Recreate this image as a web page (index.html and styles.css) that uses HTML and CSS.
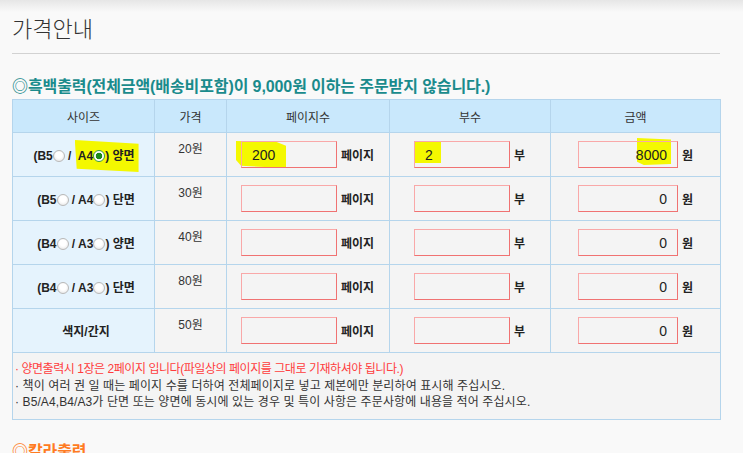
FILE: index.html
```html
<!DOCTYPE html>
<html lang="ko">
<head>
<meta charset="utf-8">
<link rel="stylesheet" href="styles.css">
</head>
<body>
<div class="page">
  <h1 class="title">가격안내</h1>
  <hr class="rule">
  <h2 class="sec bw">◎흑백출력(전체금액(배송비포함)이 9,000원 이하는 주문받지 않습니다.)</h2>
  <table class="price">
    <colgroup>
      <col class="c1"><col class="c2"><col class="c3"><col class="c4"><col class="c5">
    </colgroup>
    <thead>
      <tr><th>사이즈</th><th>가격</th><th>페이지수</th><th>부수</th><th>금액</th></tr>
    </thead>
    <tbody>
      <tr>
        <td class="size"><b>(B5<span class="radio"></span> / <span class="hl hl-size">A4<span class="radio on"></span>) 양면</span></b></td>
        <td class="cost">20원</td>
        <td class="qty"><span class="field"><span class="hl hl-page"></span><input class="box" value="200"></span><span class="unit">페이지</span></td>
        <td class="copies"><span class="field"><span class="hl hl-copy"></span><input class="box" value="2"></span><span class="unit">부</span></td>
        <td class="amt"><span class="field"><span class="hl hl-amt"></span><input class="box wide right" value="8000"></span><span class="unit">원</span></td>
      </tr>
      <tr>
        <td class="size"><b>(B5<span class="radio"></span> / A4<span class="radio"></span>) 단면</b></td>
        <td class="cost">30원</td>
        <td class="qty"><span class="field"><input class="box" value=""></span><span class="unit">페이지</span></td>
        <td class="copies"><span class="field"><input class="box" value=""></span><span class="unit">부</span></td>
        <td class="amt"><span class="field"><input class="box wide right" value="0"></span><span class="unit">원</span></td>
      </tr>
      <tr>
        <td class="size"><b>(B4<span class="radio"></span> / A3<span class="radio"></span>) 양면</b></td>
        <td class="cost">40원</td>
        <td class="qty"><span class="field"><input class="box" value=""></span><span class="unit">페이지</span></td>
        <td class="copies"><span class="field"><input class="box" value=""></span><span class="unit">부</span></td>
        <td class="amt"><span class="field"><input class="box wide right" value="0"></span><span class="unit">원</span></td>
      </tr>
      <tr>
        <td class="size"><b>(B4<span class="radio"></span> / A3<span class="radio"></span>) 단면</b></td>
        <td class="cost">80원</td>
        <td class="qty"><span class="field"><input class="box" value=""></span><span class="unit">페이지</span></td>
        <td class="copies"><span class="field"><input class="box" value=""></span><span class="unit">부</span></td>
        <td class="amt"><span class="field"><input class="box wide right" value="0"></span><span class="unit">원</span></td>
      </tr>
      <tr>
        <td class="size"><b>색지/간지</b></td>
        <td class="cost">50원</td>
        <td class="qty"><span class="field"><input class="box" value=""></span><span class="unit">페이지</span></td>
        <td class="copies"><span class="field"><input class="box" value=""></span><span class="unit">부</span></td>
        <td class="amt"><span class="field"><input class="box wide right" value="0"></span><span class="unit">원</span></td>
      </tr>
      <tr>
        <td class="notes" colspan="5">
          <p class="note red">· 양면출력시 1장은 2페이지 입니다(파일상의 페이지를 그대로 기재하셔야 됩니다.)</p>
          <p class="note">· 책이 여러 권 일 때는 페이지 수를 더하여 전체페이지로 넣고 제본에만 분리하여 표시해 주십시오.</p>
          <p class="note">· B5/A4,B4/A3가 단면 또는 양면에 동시에 있는 경우 및 특이 사항은 주문사항에 내용을 적어 주십시오.</p>
        </td>
      </tr>
    </tbody>
  </table>
  <h2 class="sec color">◎칼라출력</h2>
</div>
</body>
</html>
```

FILE: styles.css
```css
html, body {
  margin: 0;
  padding: 0;
}
body {
  background: linear-gradient(#e6e6e6 0px, #f9f9f9 12px, #f9f9f9 100%);
  font-family: "Liberation Sans", Arial, "Noto Sans CJK KR", sans-serif;
  color: #333;
  height: 453px;
  overflow: hidden;
}
.page {
  padding: 0 24px 0 12px;
}
.title {
  margin: 0;
  padding-top: 12px;
  height: 31px;
  font-family: "Noto Sans CJK KR", sans-serif;
  font-weight: 300;
  font-size: 22px;
  line-height: 31px;
  color: #333;
}
.rule {
  margin: 10px 0 0 0;
  border: 0;
  border-top: 1px solid #d2d2d2;
  height: 0;
  width: 708px;
}
.sec {
  margin: 21px 0 0 0;
  font-size: 16px;
  line-height: 24px;
  height: 24px;
  font-weight: bold;
  font-family: "Liberation Sans", Arial, "Noto Sans CJK KR", sans-serif;
  letter-spacing: -0.1px;
  white-space: nowrap;
}
.sec.bw {
  color: #1a8b8c;
}
.sec.color {
  color: #ff7b22;
  margin-top: 20px;
}
.price {
  border-collapse: collapse;
  width: 708px;
  table-layout: fixed;
  font-size: 12px;
  border: 1px solid #b5d5ec;
}
.c1 { width: 142px; }
.c2 { width: 72px; }
.c3 { width: 163px; }
.c4 { width: 161px; }
.c5 { width: 170px; }
.price th, .price td {
  border: 1px solid #b5d5ec;
  padding: 0;
  box-sizing: border-box;
}
.price th {
  background: #c9e8fc;
  height: 33px;
  font-weight: normal;
  color: #333;
  font-size: 12px;
  text-align: center;
}
.price td {
  background: #f4f4f4;
  height: 44px;
}
.price td.size {
  background: #e5f3fd;
  text-align: center;
  color: #222;
  white-space: nowrap;
  padding-left: 5px;
}
.price td.size b {
  font-weight: bold;
}
.price td.cost {
  text-align: center;
  vertical-align: top;
  padding-top: 6px;
  color: #333;
}
.price td.qty, .price td.copies, .price td.amt {
  white-space: nowrap;
}
.price td.qty {
  padding-left: 14px;
}
.price td.copies {
  padding-left: 24px;
}
.price td.amt {
  padding-left: 27px;
}
.field {
  position: relative;
  display: inline-block;
  vertical-align: middle;
}
.box {
  position: relative;
  box-sizing: border-box;
  width: 96px;
  height: 27px;
  border: 1px solid #f07272;
  border-top-color: #f9a8a8;
  border-left-color: #f9a8a8;
  background: transparent;
  font-family: "Liberation Sans", Arial, sans-serif;
  font-size: 14px;
  color: #222;
  padding: 0 10px 0 10px;
  margin: 0;
  outline: none;
  vertical-align: middle;
}
.box.wide {
  width: 100px;
}
.box.right {
  text-align: right;
}
.unit {
  display: inline-block;
  vertical-align: middle;
  margin-left: 4px;
  font-weight: bold;
  color: #222;
  font-size: 12px;
}
.radio {
  display: inline-block;
  width: 12px;
  height: 12px;
  border: 1px solid #b8b8b8;
  border-radius: 50%;
  background: radial-gradient(circle at 50% 40%, #fff 0 3px, #ececec 6px);
  vertical-align: -2px;
  margin: 0;
  box-sizing: border-box;
}
.radio.on {
  border-color: #3b9b3b;
  background: radial-gradient(circle, #1a8a1a 0 3px, #fff 3.6px);
}
.hl {
  background: #f4f800;
}
.hl-size {
  padding: 9px 4px 9px 3px;
  clip-path: polygon(0 0, 100% 12%, 100% 100%, 3% 90%);
}
.hl-page, .hl-copy, .hl-amt {
  position: absolute;
  display: block;
}
.hl-page {
  left: -5px;
  top: 0;
  width: 50px;
  height: 27px;
  clip-path: polygon(0 0, 80% 3%, 100% 18%, 100% 100%, 10% 92%, 0 70%);
}
.hl-copy {
  left: 0;
  top: 0;
  width: 27px;
  height: 22px;
}
.hl-amt {
  left: 59px;
  top: -3px;
  width: 34px;
  height: 27px;
  clip-path: polygon(0 0, 100% 6%, 100% 96%, 20% 100%, 0 88%);
}
.price td.notes {
  height: 65px;
  padding: 8px 0 8px 2px;
  vertical-align: top;
  background: #f4f4f4;
}
.note {
  margin: 0;
  font-size: 12px;
  line-height: 16.5px;
  height: 16.5px;
  color: #333;
  white-space: nowrap;
  letter-spacing: 0.1px;
}
.note.red {
  color: #ff3c3c;
  letter-spacing: -0.45px;
}
```
